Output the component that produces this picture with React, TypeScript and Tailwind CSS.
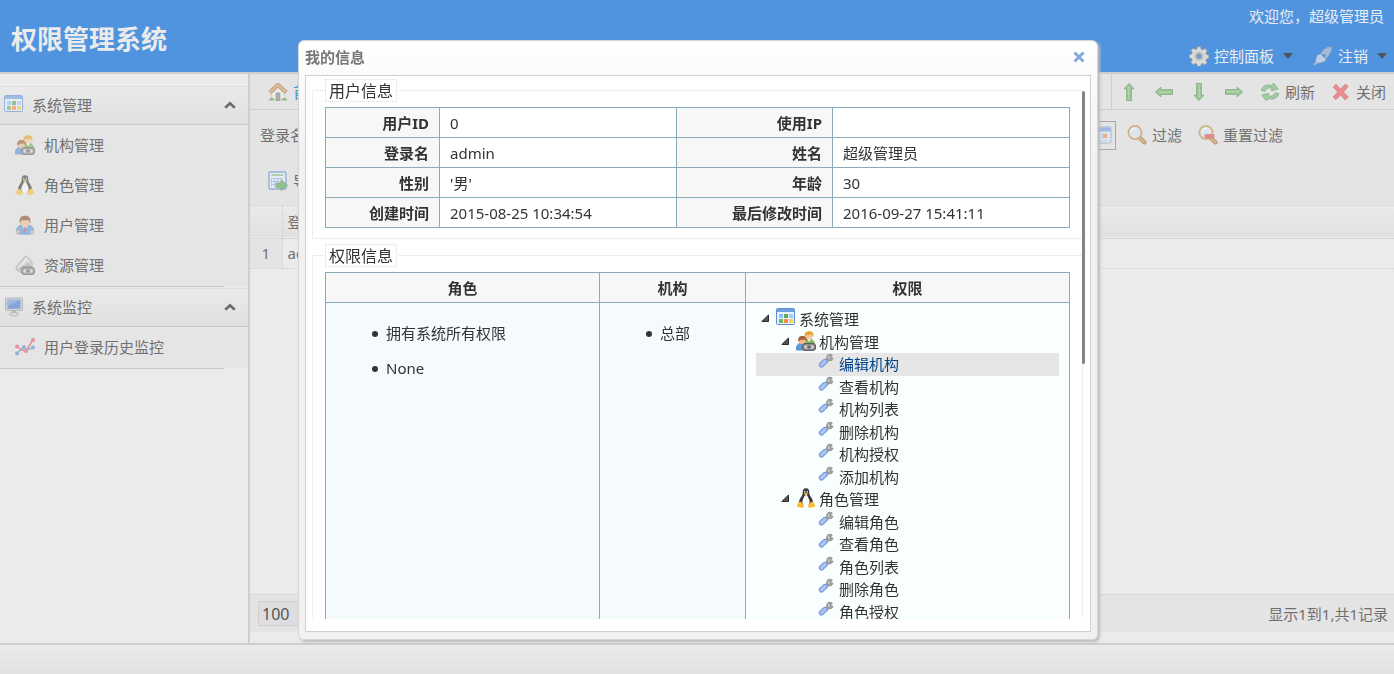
import type { ReactNode } from 'react'

function Svg({ children, className = 'h-5 w-5' }: { children: ReactNode; className?: string }) {
  return (
    <svg viewBox="0 0 20 20" fill="none" aria-hidden="true" className={`${className} shrink-0`}>
      {children}
    </svg>
  )
}

function WindowIcon() {
  return (
    <Svg>
      <rect x="0.5" y="0.5" width="18" height="16" rx="1" fill="#eaf2fc" stroke="#5f8cd0" />
      <rect x="1" y="1" width="17" height="3" fill="#6f9fe0" />
      <rect x="3" y="6" width="4" height="4" fill="#8cc3f5" />
      <rect x="8" y="6" width="4" height="4" fill="#55ad5a" />
      <rect x="13" y="6" width="4" height="4" fill="#a5cdf7" />
      <rect x="3" y="11" width="4" height="4" fill="#6cba5e" />
      <rect x="8" y="11" width="4" height="4" fill="#fb8748" />
      <rect x="13" y="11" width="4" height="4" fill="#f7cf5c" />
    </Svg>
  )
}

function ChainLink() {
  return (
    <>
      <rect x="6.500" y="12.500" width="13" height="7" rx="2.500" fill="#8a8a8a" stroke="#5e5e5e" />
      <rect x="8.500" y="14.500" width="3.500" height="3" rx="1" fill="#e4e4e4" />
      <rect x="14" y="14.500" width="3.500" height="3" rx="1" fill="#e4e4e4" />
      <path d="M10.500 16h5" stroke="#4d4d4d" strokeWidth="1.200" />
    </>
  )
}

function GroupIcon() {
  return (
    <Svg>
      <path d="M8 15c0-5 1.500-7 5-7s5.500 2 6 7z" fill="#79bd63" stroke="#559b47" strokeWidth="0.700" />
      <path d="M11.500 8l1.700 3 1.700-3z" fill="#fff" />
      <circle cx="13" cy="4.800" r="3.600" fill="#f6c79a" />
      <path d="M8.700 6C8.200 1.500 10.200.2 13.200.2s4.800 1.600 4.200 5.800c-.9-.6-1.200-2.300-1.700-2.600-1.800.7-4.300.3-5.200.7-.5.300-1 1.500-1.800 1.900z" fill="#e7a52b" />
      <path d="M.4 19c0-5 2-7 5.400-7s4.900 2 5 7z" fill="#5f9ade" stroke="#3b73b9" strokeWidth="0.700" />
      <circle cx="6.300" cy="9.600" r="3.600" fill="#f1b98c" />
      <path d="M2.200 10.800C1.700 6.800 3.300 5 6.500 5s4.700 1.800 4 5.800c-.9-.6-1.200-2.100-1.700-2.300-1.500.5-3.400.1-4.500.5-.6.300-1.200 1.300-2.100 1.800z" fill="#a5603a" />
      <ChainLink />
    </Svg>
  )
}

function TuxIcon() {
  return (
    <Svg>
      <path d="M10 .2C7.500.2 6.500 2 6.700 4.600c.1 2-.7 3-2 5C3.200 12 2.600 14.500 3 17h14c.4-2.500-.2-5-1.700-7.400-1.300-2-2.100-3-2-5C13.500 2 12.500.2 10 .2z" fill="#3a3a3d" />
      <path d="M10 7c-1.300 0-1.600 1.200-2.400 3-.8 1.700-1.700 3.400-1 5.700.7 2.300 6.100 2.300 6.800 0 .7-2.300-.2-4-1-5.700C11.600 8.200 11.300 7 10 7z" fill="#fbfbfb" />
      <ellipse cx="8.700" cy="3.800" rx="0.800" ry="1" fill="#ccc" />
      <ellipse cx="11.300" cy="3.800" rx="0.800" ry="1" fill="#ccc" />
      <path d="M7.800 5.700L10 4.800l2.200.9L10 7.500z" fill="#f3c22c" />
      <path d="M2.400 14.500c1.300-1.100 2.500-1 3.400.2l2 3c.5 1.300-.5 2.100-2 2l-4-.6c-1-.3-1.100-1-.7-1.800.5-.8.300-2 1.300-2.800z" fill="#f8bd30" />
      <path d="M17.600 14.500c-1.300-1.100-2.500-1-3.400.2l-2 3c-.5 1.300.5 2.100 2 2l4-.6c1-.3 1.100-1 .7-1.800-.5-.8-.3-2-1.300-2.800z" fill="#f8bd30" />
    </Svg>
  )
}

function UserIcon() {
  return (
    <Svg>
      <path d="M1.500 18.500c-.7-5 1.500-8 4.500-8.300h8c3 .3 5.200 3.300 4.500 8.300-2 .9-15 .9-17 0z" fill="#5c9ddb" stroke="#3c76b5" strokeWidth="0.700" />
      <path d="M7.300 10.800L10 15l2.700-4.200z" fill="#fff" />
      <path d="M9.300 12h1.400l.6 3.500-1.300 2-1.300-2z" fill="#d9534a" />
      <ellipse cx="10" cy="7" rx="4.600" ry="4.800" fill="#f2be93" />
      <path d="M4.800 8.500C3.900 3 5.900.8 10 .8s6.100 2.200 5.200 7.700c-1-1-1-3-1.600-3.600-2 .6-5.200.2-7.200.3-.6.600-.6 2.500-1.600 3.300z" fill="#8c5230" />
      <circle cx="2.800" cy="17" r="1.700" fill="#f0b78c" />
      <circle cx="17.200" cy="17" r="1.700" fill="#f0b78c" />
    </Svg>
  )
}

function ResourceIcon() {
  return (
    <Svg>
      <path d="M1 12L10 1.500q1-1 2 0L17 7v9L8 18.500 1.500 15z" fill="#cfcfcf" stroke="#9b9b9b" />
      <path d="M4 13L11 4.500l3 2.500" stroke="#f2f2f2" strokeWidth="1.500" />
      <path d="M12 7l3 2.500-3 1.500z" fill="#7ba9e0" />
      <path d="M4.500 15c1.500-3.500 6-4.500 11-3.500l2.500 2.500" stroke="#8f8f8f" strokeWidth="1.500" />
      <ChainLink />
    </Svg>
  )
}

function MonitorIcon() {
  return (
    <Svg>
      <rect x="1.500" y="1" width="17" height="12.500" rx="1" fill="#c9ccd2" stroke="#96999f" />
      <rect x="3.500" y="2.800" width="13" height="9" fill="#477ccc" />
      <path d="M3.500 2.800h13L3.500 9z" fill="#6b99dd" />
      <path d="M8 14h4l.6 2.500H7.400z" fill="#9a9a9a" />
      <ellipse cx="10" cy="17.300" rx="5" ry="1.700" fill="#dcdcdc" stroke="#989898" />
    </Svg>
  )
}

function ChartIcon() {
  return (
    <Svg>
      <path d="M2 16l6-5 3 2 7-2" stroke="#5a8bce" strokeWidth="1.500" />
      <path d="M2 9.500l5 3.500 4 1 7-11" stroke="#e3505a" strokeWidth="1.500" />
      <circle cx="2" cy="16.500" r="2" fill="#5f90d2" />
      <circle cx="9" cy="10" r="2" fill="#5f90d2" />
      <circle cx="18" cy="10.500" r="2" fill="#5f90d2" />
      <circle cx="2" cy="9.500" r="2" fill="#e8606a" />
      <circle cx="11" cy="14" r="2" fill="#e8606a" />
      <circle cx="18" cy="3" r="2" fill="#e8606a" />
    </Svg>
  )
}

function HomeIcon() {
  return (
    <Svg>
      <path d="M3.500 9L10 3l6.500 6v9h-13z" fill="#f0efe8" stroke="#b3b1a5" strokeWidth="0.700" />
      <rect x="8" y="11" width="4" height="7.500" fill="#8d8d8d" stroke="#666" strokeWidth="0.600" />
      <path d="M1.800 10.500L10 3l8.200 7.500" stroke="#94603a" strokeWidth="4" strokeLinejoin="round" />
      <path d="M1.900 10.300L10 3l8.100 7.300" stroke="#d99c61" strokeWidth="2.800" strokeLinejoin="round" />
      <path d="M1 18.800c0-3.200 4.300-4.400 5.700-.8zM13.300 18c1.400-3.600 5.700-2.400 5.700.8z" fill="#54a94b" />
    </Svg>
  )
}

function ExportIcon() {
  return (
    <Svg>
      <rect x="1" y="1" width="17" height="17" rx="1" fill="#eaf2fd" stroke="#5f8fcf" strokeWidth="1.400" />
      <path d="M3.500 4h12" stroke="#6bb465" strokeWidth="1.500" />
      <path d="M3.500 7.500h12M3.500 10.500h12M3.500 13.500h12M6.500 7v9M10 7v9M13.500 7v9M3.500 7v9" stroke="#8fb5e4" />
      <path d="M8 12h5V8.700l6.500 5.600-6.500 5.500V16.500H8z" fill="#59a953" stroke="#3a823a" strokeWidth="0.700" />
    </Svg>
  )
}

function GearIcon() {
  return (
    <Svg>
      <path
        d="M8.300.8h3.400l.5 2.500 1.600.7 2.100-1.500 2.300 2.400-1.400 2.100.6 1.600 2.400.5v3.300l-2.400.5-.7 1.600 1.400 2.100-2.300 2.300-2.100-1.400-1.600.7-.4 2.400H8.300l-.5-2.500-1.600-.7L4.200 18.500l-2.400-2.300 1.400-2.100-.6-1.600-2.400-.5V8.700l2.400-.5.7-1.600L1.900 4.500 4.200 2.200l2.100 1.400 1.600-.7z"
        fill="#dadada"
        stroke="#9b9b9b"
        strokeWidth="0.800"
      />
      <circle cx="10" cy="10.300" r="4.700" fill="#c4c4c4" />
      <circle cx="10" cy="10.300" r="2.600" fill="#6b9bd8" stroke="#a4a4a4" />
    </Svg>
  )
}

function PlugIcon() {
  return (
    <Svg>
      <path d="M1 19l4-4M15.500 4.500L19 1" stroke="#aeb9c8" strokeWidth="2" />
      <path d="M9.500 4.500l5-3.500 4 0 0 4-3 5-3-.5-3-2.500z" fill="#a3bbdb" stroke="#7d99bf" strokeWidth="0.700" />
      <path d="M7.300 7.700l6 5.500-2 2.500-6.500 1.800-2.500-2.500 1.700-5.700z" fill="#bccfe8" stroke="#7d99bf" strokeWidth="0.700" />
      <path d="M8.500 8l2-2M12.500 11.500l2-2" stroke="#cacaca" strokeWidth="1.500" />
    </Svg>
  )
}

function ArrowUpIcon({ className = 'h-5 w-5' }: { className?: string }) {
  return (
    <Svg className={className}>
      <path d="M10 1.500l4.700 5.300h-2.400v11.700H7.700V6.800H5.300z" fill="#6fb667" stroke="#45904a" />
      <path d="M9.500 5v12.500" stroke="#97d08d" strokeWidth="1.200" />
    </Svg>
  )
}

function RefreshIcon() {
  return (
    <Svg>
      <path d="M1.200 8.500C2 4 7.500 1.500 12 3.700L13.500 1l4.700 6-7 1.700 1-2.400C9 5.300 6.300 6 5 9.300z" fill="#79bf73" stroke="#45904a" strokeWidth="0.800" />
      <path d="M18.800 11.500c-.8 4.500-6.300 7-10.800 4.800L6.500 19l-4.700-6 7-1.700-1 2.400c3.200 1 5.900.3 7.200-3z" fill="#79bf73" stroke="#45904a" strokeWidth="0.800" />
    </Svg>
  )
}

function CrossIcon() {
  return (
    <Svg>
      <path d="M2.300 5L5 2.300 9.500 7 14.500 2 17 4.500 12.500 10l4.800 5-3 3-4.800-5-4.700 4.800L2 15l4.800-5z" fill="#f0545a" stroke="#cb4047" strokeWidth="0.800" />
    </Svg>
  )
}

function SearchIcon({ minus }: { minus?: boolean }) {
  return (
    <Svg>
      <path d="M13 13l4.500 4.500" stroke="#94622f" strokeWidth="4" strokeLinecap="round" />
      <path d="M13.300 13.300l4 4" stroke="#d9a052" strokeWidth="2.200" strokeLinecap="round" />
      <circle cx="8" cy="7.500" r="6.600" fill="#d5e7f7" stroke="#cc8f46" strokeWidth="1.700" />
      <path d="M4 7.500C4 5 6 3.500 8.500 3.500" stroke="#fff" strokeWidth="1.500" />
      {minus && <rect x="7" y="9.500" width="9" height="3.500" rx="0.500" fill="#ee5054" stroke="#c33a40" strokeWidth="0.600" />}
    </Svg>
  )
}

function CalendarIcon() {
  return (
    <Svg>
      <rect x="1" y="2" width="18" height="16" rx="1" fill="#e3ecf8" stroke="#7d9cc6" />
      <rect x="1.500" y="2.500" width="17" height="4" fill="#6f9be0" />
      <path d="M3 9.500h14M3 12.500h14M3 15.500h14M6.500 7v10M10 7v10M13.500 7v10" stroke="#b9cbe4" />
      <rect x="11" y="9" width="4" height="4" fill="#f08a5a" />
    </Svg>
  )
}

function WrenchIcon() {
  return (
    <Svg>
      <path d="M9.500 8.500l3.500-3" stroke="#a5a5a5" strokeWidth="4" />
      <path d="M15.700 2.300a2.800 2.800 0 1 0 .8 3.200l-2.200-.3v-1.700z" fill="#d6d6d6" stroke="#999" strokeWidth="1.800" strokeLinejoin="round" />
      <path d="M5.500 11.800L9 8.500" stroke="#7296d6" strokeWidth="5.400" strokeLinecap="round" />
      <path d="M5.500 11.800L9 8.500" stroke="#a9c4f3" strokeWidth="3.400" strokeLinecap="round" />
    </Svg>
  )
}

function Chevron() {
  return (
    <svg viewBox="0 0 12 8" className="ml-auto h-2 w-3" fill="none" aria-hidden="true">
      <path d="M1.200 6.800L6 2.200l4.800 4.600" stroke="#6a6a6a" strokeWidth="2.600" />
    </svg>
  )
}

function Caret() {
  return (
    <svg viewBox="0 0 10 6" className="h-1.5 w-2.5" aria-hidden="true">
      <path d="M0 0h10L5 6z" fill="#505459" />
    </svg>
  )
}

type NavItem = { label: string; icon: ReactNode }

function NavGroup({ title, icon, items }: { title: string; icon: ReactNode; items: NavItem[] }) {
  return (
    <section>
      <button className="flex h-[39px] w-full items-center gap-2 border-t border-b border-t-[#dedede] border-b-[#c8c8c8] bg-linear-to-b from-[#eaeaea] to-[#e0e0e0] pr-3 pb-0.5 pl-1">
        <span className="opacity-60">{icon}</span>
        {title}
        <Chevron />
      </button>
      <ul className="bg-[#e5e5e5] pb-px">
        {items.map((item) => (
          <li key={item.label}>
            <a href="#" className="flex h-10 items-center gap-[9px] pl-[15px]">
              <span className="opacity-60">{item.icon}</span>
              {item.label}
            </a>
          </li>
        ))}
      </ul>
      <div className="mr-6 border-b border-[#c8c8c8]" />
    </section>
  )
}

function ArrowButton({ icon, label }: { icon: ReactNode; label: string }) {
  return (
    <button aria-label={label} className="flex h-9 w-[35px] items-center justify-center">
      <span className="opacity-60">{icon}</span>
    </button>
  )
}

function ToolButton({ icon, children }: { icon: ReactNode; children: ReactNode }) {
  return (
    <button className="flex h-9 shrink-0 items-center gap-[5px] px-2 whitespace-nowrap">
      <span className="opacity-60">{icon}</span>
      {children}
    </button>
  )
}

const userRows = [
  ['用户ID', '0', '使用IP', ''],
  ['登录名', 'admin', '姓名', '超级管理员'],
  ['性别', "'男'", '年龄', '30'],
  ['创建时间', '2015-08-25 10:34:54', '最后修改时间', '2016-09-27 15:41:11'],
]

const tree = [
  { name: '机构管理', icon: <GroupIcon />, actions: ['编辑机构', '查看机构', '机构列表', '删除机构', '机构授权', '添加机构'] },
  { name: '角色管理', icon: <TuxIcon />, actions: ['编辑角色', '查看角色', '角色列表', '删除角色', '角色授权'] },
]

function TreeArrow() {
  return (
    <svg viewBox="0 0 20 20" className="h-5 w-5 shrink-0" aria-hidden="true">
      <path d="M5.800 13.500L12.500 7v6.500z" fill="#555" stroke="#2b2b2b" strokeLinejoin="round" />
    </svg>
  )
}

function PermissionTree() {
  return (
    <ul className="leading-normal">
      <li>
        <div className="flex">
          <TreeArrow />
          <WindowIcon />
          <span className="pl-[3px]">系统管理</span>
        </div>
        <ul>
          {tree.map((group) => (
            <li key={group.name}>
              <div className="flex pl-5">
                <TreeArrow />
                {group.icon}
                <span className="pl-[3px]">{group.name}</span>
              </div>
              <ul>
                {group.actions.map((action) => (
                  <li
                    key={action}
                    className={`flex pl-[60px] ${action === '编辑机构' ? 'bg-[#e6e6e6] text-[#00438a]' : ''}`}
                  >
                    <WrenchIcon />
                    <span className="pl-[3px]">{action}</span>
                  </li>
                ))}
              </ul>
            </li>
          ))}
        </ul>
      </li>
    </ul>
  )
}

function BulletList({ items }: { items: string[] }) {
  return (
    <ul className="pl-[46px] leading-[35px]">
      {items.map((item) => (
        <li key={item} className="flex items-center gap-2 before:size-1.5 before:rounded-full before:bg-[#333]">
          {item}
        </li>
      ))}
    </ul>
  )
}

function Group({ title, children }: { title: string; children: ReactNode }) {
  return (
    <fieldset className="mb-[5px] min-w-0 border border-dotted border-[#dcdcdc] px-3 pt-[5px] pb-2.5">
      <legend className="h-[23px] border border-dotted border-[#dcdcdc] px-[3px] text-base leading-[23px]">{title}</legend>
      {children}
    </fieldset>
  )
}

function InfoDialog() {
  return (
    <div
      role="dialog"
      aria-label="我的信息"
      className="flex h-[600px] w-[800px] flex-col rounded-md border border-[#d4d4d4] bg-linear-to-b from-white to-[#f1f1f1] to-20% px-1.5 pb-[7px] text-[#333] shadow-[2px_2px_3px_#bbb]"
    >
      <div className="flex h-[34px] shrink-0 items-center justify-between pr-1.5 pb-0.5">
        <h2 className="font-bold text-[#777]">我的信息</h2>
        <button aria-label="关闭窗口">
          <svg viewBox="0 0 12 12" className="h-3 w-3" aria-hidden="true">
            <path d="M1.500 1.500l9 9m0-9l-9 9" stroke="#82abdf" strokeWidth="3" />
          </svg>
        </button>
      </div>
      <div className="relative min-h-0 flex-1 border border-[#d0d0d0] bg-white pt-[3px] pr-[7px] pb-3 pl-1.5">
        <div className="h-full overflow-hidden">
          <Group title="用户信息">
            <table className="w-full table-fixed border-collapse">
              <colgroup>
                <col className="w-[114px]" />
                <col />
                <col className="w-[156px]" />
                <col />
              </colgroup>
              <tbody>
                {userRows.map(([k1, v1, k2, v2]) => (
                  <tr key={k1} className="h-[30px]">
                    <th className="border border-[#8aabba] bg-[#f7f7f7] px-2.5 text-right">{k1}</th>
                    <td className="border border-[#8aabba] px-2.5">{v1}</td>
                    <th className="border border-[#8aabba] bg-[#f7f7f7] px-2.5 text-right">{k2}</th>
                    <td className="border border-[#8aabba] px-2.5">{v2}</td>
                  </tr>
                ))}
              </tbody>
            </table>
          </Group>
          <Group title="权限信息">
            <table className="w-full table-fixed border-collapse">
              <thead>
                <tr className="h-[30px] bg-[#f7f7f7]">
                  <th className="w-[274px] border border-[#8aabba]">角色</th>
                  <th className="w-[146px] border border-[#8aabba]">机构</th>
                  <th className="border border-[#8aabba]">权限</th>
                </tr>
              </thead>
              <tbody>
                <tr className="align-top">
                  <td className="border border-[#8aabba] bg-[#f5fafd] pt-[13px]">
                    <BulletList items={['拥有系统所有权限', 'None']} />
                  </td>
                  <td className="border border-[#8aabba] bg-[#f5fafd] pt-[13px]">
                    <BulletList items={['总部']} />
                  </td>
                  <td className="border border-[#8aabba] bg-[#f9ffff] px-2.5 py-[5px]">
                    <PermissionTree />
                  </td>
                </tr>
              </tbody>
            </table>
          </Group>
        </div>
        <div className="absolute top-[15px] right-[5px] h-[273px] w-[3px] rounded-full bg-[#858585]" />
      </div>
    </div>
  )
}

export default function App() {
  return (
    <div className="flex h-screen flex-col overflow-hidden bg-[#ebebeb] font-['Noto_Sans','Noto_Sans_CJK_SC',sans-serif] text-[15px] leading-5 text-[#707070]">
      <header className="flex h-[74px] shrink-0 justify-between border-b-2 border-[#cdcdcd] bg-[#5094df] text-[#e9edf2]">
        <h1 className="self-center pt-1.5 pl-[11px] text-[26px] leading-9 font-bold text-[#ebebeb]">权限管理系统</h1>
        <div className="flex flex-col items-end justify-between pt-1.5 pb-1.5">
          <p className="pr-2.5">欢迎您，超级管理员</p>
          <nav className="flex items-center gap-5 pr-[7px]">
            <button className="flex items-center gap-[5px]">
              <GearIcon />
              控制面板
              <span className="pl-1">
                <Caret />
              </span>
            </button>
            <button className="flex items-center gap-[5px]">
              <PlugIcon />
              注销
              <span className="pl-1">
                <Caret />
              </span>
            </button>
          </nav>
        </div>
      </header>

      <div className="flex min-h-0 flex-1">
        <aside className="flex w-[250px] shrink-0 flex-col gap-px border-r-2 border-[#cfcfcf] pt-3">
          <NavGroup
            title="系统管理"
            icon={<WindowIcon />}
            items={[
              { label: '机构管理', icon: <GroupIcon /> },
              { label: '角色管理', icon: <TuxIcon /> },
              { label: '用户管理', icon: <UserIcon /> },
              { label: '资源管理', icon: <ResourceIcon /> },
            ]}
          />
          <NavGroup title="系统监控" icon={<MonitorIcon />} items={[{ label: '用户登录历史监控', icon: <ChartIcon /> }]} />
        </aside>

        <main className="flex min-w-0 flex-1 flex-col pb-[11px]">
          <div className="flex h-9 shrink-0 items-center justify-between border-b border-[#cfcfcf] bg-[#e4e4e4]">
            <a href="#" className="flex items-center gap-[5px] pl-[18px] text-[#3f9ccb]">
              <span className="opacity-60">
                <HomeIcon />
              </span>
              首页
            </a>
            <div className="flex h-full items-center border-l border-[#cfcfcf]">
              <ArrowButton label="上" icon={<ArrowUpIcon />} />
              <ArrowButton label="左" icon={<ArrowUpIcon className="h-5 w-5 -rotate-90" />} />
              <ArrowButton label="下" icon={<ArrowUpIcon className="h-5 w-5 rotate-180" />} />
              <ArrowButton label="右" icon={<ArrowUpIcon className="h-5 w-5 rotate-90" />} />
              <ToolButton icon={<RefreshIcon />}>刷新</ToolButton>
              <ToolButton icon={<CrossIcon />}>关闭</ToolButton>
            </div>
          </div>

          <div className="flex h-24 shrink-0 flex-col border-b border-[#dadada] bg-[#e4e4e4]">
            <div className="flex h-[50px] items-center pr-[103px] pl-2.5">
              <label htmlFor="login" className="shrink-0 pr-2">
                登录名
              </label>
              <div className="mr-[3px] flex h-[29px] min-w-0 flex-1 items-center border border-[#a8a8a8] pr-[3px]">
                <input id="login" className="min-w-0 flex-1 bg-transparent outline-none" />
                <span className="opacity-60">
                  <CalendarIcon />
                </span>
              </div>
              <ToolButton icon={<SearchIcon />}>过滤</ToolButton>
              <ToolButton icon={<SearchIcon minus />}>重置过滤</ToolButton>
            </div>
            <div className="flex flex-1 items-center pb-1 pl-2.5">
              <ToolButton icon={<ExportIcon />}>导出</ToolButton>
            </div>
          </div>

          <table className="w-full table-fixed border-collapse text-left">
            <thead>
              <tr className="h-8 border-b border-[#d8d8d8] bg-linear-to-b from-[#eaeaea] to-[#e1e1e1]">
                <th className="w-8 border-r border-dotted border-r-[#cdcdcd]" />
                <th className="px-[5px] font-normal">登录名</th>
              </tr>
            </thead>
            <tbody>
              <tr className="h-[30px] border-b border-dotted border-[#cdcdcd]">
                <td className="border-r border-dotted border-[#cdcdcd] bg-[#e4e4e4] text-center">1</td>
                <td className="px-[5px]">admin</td>
              </tr>
            </tbody>
          </table>

          <div className="mt-auto flex h-[38px] shrink-0 items-center justify-between border-t border-[#d8d8d8] bg-[#e4e4e4] pr-1.5 pl-2">
            <select
              aria-label="每页记录数"
              className="h-[25px] w-[60px] appearance-none border border-[#cfcfcf] bg-[#dedee0] pl-[3px] text-base leading-5 text-[#555]"
            >
              <option>100</option>
            </select>
            <span>显示1到1,共1记录</span>
          </div>
        </main>
      </div>

      <footer className="h-[31px] shrink-0 border-t-2 border-[#cdcdcd] bg-linear-to-b from-[#ebebeb] to-[#e1e1e1]" />

      <div className="fixed inset-0 flex items-start justify-center pt-10 pl-0.5">
        <InfoDialog />
      </div>
    </div>
  )
}
